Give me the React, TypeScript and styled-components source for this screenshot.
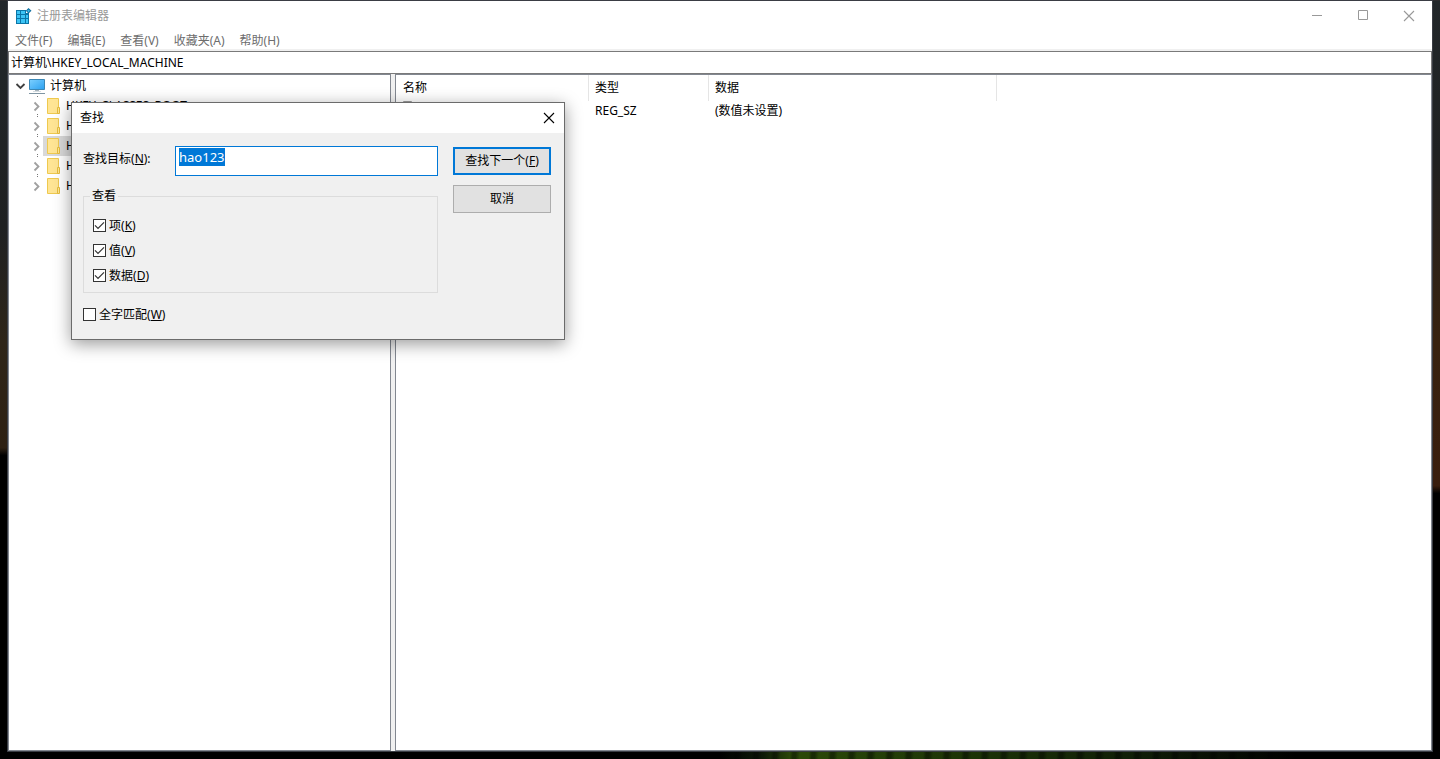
import React, { useEffect, useRef } from "react";
import styled, { createGlobalStyle } from "styled-components";

const GlobalStyle = createGlobalStyle`
  * { box-sizing: border-box; }
  body {
    margin: 0;
    font: 12px/16px "Noto Sans", "Noto Sans CJK SC", sans-serif;
    color: #000;
  }
  button, input { font: inherit; color: inherit; }
`;

const Desktop = styled.div`
  position: relative;
  display: flex;
  min-height: 100vh;
  padding: 1px 8px 8px;
  background:
    linear-gradient(90deg, #2b2b2d 7%, #8e8e8e 7%, #a8a8a8 24%, #e8e8e8 24%, #e0e0e0 67%, #2b2b2d 67%) top / 100% 1px no-repeat,
    repeating-linear-gradient(94deg, transparent 0 9px, rgba(0, 0, 0, 0.4) 12px 15px, transparent 19px) bottom / 100% 7px no-repeat,
    linear-gradient(90deg, transparent 50%, #0d1a08 53%, #2c4a08 55%, #1c3307 68%, #0f1c07 80%, transparent 90%) bottom / 100% 7px no-repeat,
    linear-gradient(180deg, #22272a 0%, #1f2122 30%, #2e2519 45%, #2e2113 59%, #000 60%) left / 8px 100% no-repeat,
    linear-gradient(180deg, #22272a 0%, #1f2122 20%, #38220f 45%, #3a1e0e 64%, #000 65%) right / 8px 100% no-repeat,
    #000;
`;

const Window = styled.main`
  flex: 1;
  min-width: 0;
  display: flex;
  flex-direction: column;
  background: #fff;
  box-shadow: 0 0 0 1px #3a3d44;
`;

const TitleBar = styled.header`
  display: flex;
  align-items: center;
  height: 29px;
  padding-left: 8px;
  gap: 5px;
  color: #999;
`;

const WindowTitle = styled.h1`
  flex: 1;
  margin: 0;
  font-size: 12px;
  font-weight: 400;
`;

const CaptionButtons = styled.div`
  display: flex;
  align-self: stretch;
`;

const CaptionButton = styled.button<{ $width?: number }>`
  display: flex;
  align-items: center;
  justify-content: center;
  width: ${(p) => p.$width ?? 46}px;
  padding: 0;
  border: 0;
  background: none;
`;

const MenuBar = styled.nav`
  display: flex;
  align-items: center;
  gap: 15px;
  height: 21px;
  padding: 2px 0 0 7px;
  border-bottom: 2px solid #f0f0f0;
`;

const MenuItem = styled.button`
  padding: 0;
  border: 0;
  background: none;
  color: #6d6d6d;
`;

const AddressBox = styled.input`
  width: 100%;
  height: 23px;
  padding: 0 2px 2px;
  border: 1px solid #7a7a7a;
  outline: 0;
`;

const Panes = styled.div`
  flex: 1;
  display: flex;
  gap: 4px;
  background: #f0f0f0;
`;

const Pane = styled.section<{ $width?: number }>`
  flex: ${(p) => (p.$width ? `0 0 ${p.$width}px` : "1")};
  min-width: 0;
  border: 1px solid #828790;
  background: #fff;
  overflow: hidden;
`;

const Tree = styled.ul`
  margin: 0;
  padding: 1px 0 0 6px;
  list-style: none;
`;

const Branch = styled.ul`
  margin: 0;
  padding: 0 0 0 16px;
  list-style: none;
`;

const TreeRow = styled.div`
  display: flex;
  align-items: center;
  height: 20px;
`;

const Toggle = styled.button`
  display: flex;
  width: 12px;
  height: 20px;
  padding: 0;
  border: 0;
  background: none;
`;

const TreeLabel = styled.span<{ $selected?: boolean }>`
  display: flex;
  align-items: center;
  gap: 5px;
  height: 20px;
  padding: 0 3px 0 2px;
  background: ${(p) => (p.$selected ? "#d9d9d9" : "none")};
`;

const ValueTable = styled.table`
  width: 601px;
  table-layout: fixed;
  border-collapse: separate;
  border-spacing: 0;
  text-align: left;

  th, td { padding: 0 6px; font-weight: 400; }
  th:first-child, td:first-child { padding-left: 7px; }
  th { height: 26px; border-right: 1px solid #e5e5e5; }
  td { height: 20px; }
`;

const NameColumn = styled.col`width: 193px;`;
const TypeColumn = styled.col`width: 120px;`;
const DataColumn = styled.col`width: 288px;`;

const Dialog = styled.div`
  position: absolute;
  left: 71px;
  top: 102px;
  width: 494px;
  border: 1px solid #6b6b6b;
  background: #f0f0f0;
  box-shadow: 0 4px 16px rgba(0, 0, 0, 0.4);
`;

const DialogTitleBar = styled.header`
  display: flex;
  align-items: center;
  justify-content: space-between;
  height: 30px;
  padding-left: 8px;
  background: #fff;
`;

const DialogTitle = styled.h2`
  margin: 0;
  font-size: 12px;
  font-weight: 400;
`;

const DialogForm = styled.form`
  display: flex;
  gap: 15px;
  padding: 13px 13px 12px 11px;
`;

const Fields = styled.div`
  flex: 1;
`;

const FindRow = styled.div`
  display: grid;
  grid-template-columns: 92px 1fr;
`;

const FindLabel = styled.label`
  padding-top: 5px;
`;

const FindInput = styled.input`
  min-width: 0;
  height: 30px;
  padding: 2px 3px 10px;
  border: 1px solid #0078d7;
  outline: 0;
  background: #fff;
  font-size: 13px;
  line-height: 16px;

  &::selection { background: #0078d7; color: #fff; }
`;

const LookAt = styled.fieldset`
  margin: 12px 0 9px;
  padding: 9px 9px 4px;
  border: 1px solid #dcdcdc;
`;

const Legend = styled.legend`
  padding: 0 2px 0 0;
  margin-left: -3px;
  border-left: 2px solid #f0f0f0;
`;

const CheckLabel = styled.label`
  display: flex;
  align-items: center;
  gap: 3px;
  height: 25px;
`;

const CheckBox = styled.input`
  appearance: none;
  width: 13px;
  height: 13px;
  margin: 0;
  border: 1px solid #333;
  background: #fff;

  &:checked {
    background: #fff url("data:image/svg+xml,%3Csvg xmlns='http://www.w3.org/2000/svg' viewBox='0 0 11 11'%3E%3Cpath d='M1 5.4 4 8.4 10 2.4' fill='none' stroke='%23333' stroke-width='1.2'/%3E%3C/svg%3E") center / 11px 11px no-repeat;
  }
`;

const Actions = styled.div`
  display: flex;
  flex-direction: column;
  gap: 10px;
  width: 98px;
  padding-top: 1px;
`;

const ActionButton = styled.button<{ $primary?: boolean }>`
  height: 28px;
  padding: 0;
  border: ${(p) => (p.$primary ? "2px solid #0078d7" : "1px solid #adadad")};
  background: #e1e1e1;
`;

const RegistryIcon = () => (
  <svg width="16" height="16" viewBox="0 0 16 16" aria-hidden="true">
    <path d="M0 2h10v3h3v11H0z" fill="#0a76a8" />
    <path
      d="M1 3h3v3H1zM5 3h4v3H5zM1 7h3v3H1zM5 7h4v3H5zM1 11h3v4H1zM5 11h4v4H5zM10 7h2v3h-2zM10 11h2v4h-2z"
      fill="#3cc4f5"
    />
    <path d="M12.5 0 15.5 2.8 12.5 5.6 9.8 2.8z" fill="#0f6f9f" />
    <path d="M12.5 1.4 14 2.8 12.5 4.2 11.1 2.8z" fill="#38b6e8" />
  </svg>
);

const CloseIcon = ({ color }: { color: string }) => (
  <svg width="12" height="12" viewBox="0 0 12 12" aria-hidden="true">
    <path d="M1 1l10 10M11 1 1 11" stroke={color} strokeWidth="1.1" fill="none" />
  </svg>
);

const MonitorIcon = () => (
  <svg width="16" height="16" viewBox="0 0 16 16" aria-hidden="true">
    <defs>
      <linearGradient id="screen" x1="0" y1="0" x2="1" y2="1">
        <stop offset="0" stopColor="#7dd0ff" />
        <stop offset="1" stopColor="#2aa0f0" />
      </linearGradient>
    </defs>
    <path d="M.5 1.5h15v10H.5z" fill="url(#screen)" stroke="#3b87b5" />
    <path d="M6 12h4v1H6z" fill="#a8b4bc" />
    <path d="M4 13h8v1H4z" fill="#d5dce0" />
    <path d="M0 15.5h16" stroke="#7f95a3" />
  </svg>
);

const FolderIcon = () => (
  <svg width="16" height="16" viewBox="0 0 16 16" aria-hidden="true">
    <path d="M2.5 .5h11v15h-11z" fill="#ffe594" stroke="#eec94f" />
    <path d="M12.5 9.5h2v6h-2z" fill="#ffe594" stroke="#e6bd3d" />
  </svg>
);

const StringIcon = () => (
  <svg width="12" height="16" viewBox="0 0 12 16" role="img" aria-label="字符串值">
    <path d="M.5 .5h8l3 3v12H.5z" fill="#fff" stroke="#999" />
    <path d="M3 8h6M3 11h6" stroke="#c33" />
  </svg>
);

const ExpandedMark = () => (
  <svg width="12" height="20" viewBox="0 0 12 20" aria-hidden="true">
    <path d="M1.5 8 5.5 12 9.5 8" fill="none" stroke="#404040" strokeWidth="1.8" />
  </svg>
);

const CollapsedMark = ({ last }: { last: boolean }) => (
  <svg width="12" height="20" viewBox="0 0 12 20" aria-hidden="true">
    <path d={last ? "M6 0h1v1H6z" : "M6 0h1v1H6zM6 18h1v1H6z"} fill="#777" />
    <path d="M3.5 6.5 7.500 10.5 3.5 14.500" fill="none" stroke="#a0a0a0" strokeWidth="1.8" />
  </svg>
);

const menus = ["文件(F)", "编辑(E)", "查看(V)", "收藏夹(A)", "帮助(H)"];

const hives = [
  "HKEY_CLASSES_ROOT",
  "HKEY_CURRENT_USER",
  "HKEY_LOCAL_MACHINE",
  "HKEY_USERS",
  "HKEY_CURRENT_CONFIG",
];

const lookAtOptions = [
  { text: "项", accessKey: "K" },
  { text: "值", accessKey: "V" },
  { text: "数据", accessKey: "D" },
];

function Mnemonic({ text, letter }: { text: string; letter: string }) {
  return (
    <span>
      {text}(<u>{letter}</u>)
    </span>
  );
}

function FindDialog() {
  const inputRef = useRef<HTMLInputElement>(null);

  useEffect(() => {
    inputRef.current?.focus();
    inputRef.current?.select();
  }, []);

  return (
    <Dialog role="dialog" aria-labelledby="find-title">
      <DialogTitleBar>
        <DialogTitle id="find-title">查找</DialogTitle>
        <CaptionButton $width={30} aria-label="关闭">
          <CloseIcon color="#000" />
        </CaptionButton>
      </DialogTitleBar>
      <DialogForm onSubmit={(e) => e.preventDefault()}>
        <Fields>
          <FindRow>
            <FindLabel htmlFor="find-what">
              <Mnemonic text="查找目标" letter="N" />:
            </FindLabel>
            <FindInput id="find-what" ref={inputRef} defaultValue="hao123" spellCheck={false} autoComplete="off" />
          </FindRow>
          <LookAt>
            <Legend>查看</Legend>
            {lookAtOptions.map((o) => (
              <CheckLabel key={o.accessKey}>
                <CheckBox type="checkbox" defaultChecked />
                <Mnemonic text={o.text} letter={o.accessKey} />
              </CheckLabel>
            ))}
          </LookAt>
          <CheckLabel>
            <CheckBox type="checkbox" />
            <Mnemonic text="全字匹配" letter="W" />
          </CheckLabel>
        </Fields>
        <Actions>
          <ActionButton type="submit" $primary>
            <Mnemonic text="查找下一个" letter="F" />
          </ActionButton>
          <ActionButton type="button">取消</ActionButton>
        </Actions>
      </DialogForm>
    </Dialog>
  );
}

export default function App() {
  return (
    <Desktop>
      <GlobalStyle />
      <Window>
        <TitleBar>
          <RegistryIcon />
          <WindowTitle>注册表编辑器</WindowTitle>
          <CaptionButtons>
            <CaptionButton aria-label="最小化">
              <svg width="11" height="11" aria-hidden="true">
                <path d="M0 5.5h10" stroke="#999" />
              </svg>
            </CaptionButton>
            <CaptionButton aria-label="最大化">
              <svg width="11" height="11" aria-hidden="true">
                <path d="M.5 .5h9v9h-9z" stroke="#999" fill="none" />
              </svg>
            </CaptionButton>
            <CaptionButton aria-label="关闭">
              <CloseIcon color="#999" />
            </CaptionButton>
          </CaptionButtons>
        </TitleBar>
        <MenuBar>
          {menus.map((m) => (
            <MenuItem key={m}>{m}</MenuItem>
          ))}
        </MenuBar>
        <AddressBox aria-label="地址" defaultValue={"计算机\\HKEY_LOCAL_MACHINE"} spellCheck={false} />
        <Panes>
          <Pane $width={383}>
            <Tree>
              <li>
                <TreeRow>
                  <Toggle aria-label="折叠">
                    <ExpandedMark />
                  </Toggle>
                  <TreeLabel>
                    <MonitorIcon />
                    计算机
                  </TreeLabel>
                </TreeRow>
                <Branch>
                  {hives.map((name, i) => (
                    <li key={name}>
                      <TreeRow>
                        <Toggle aria-label="展开">
                          <CollapsedMark last={i === hives.length - 1} />
                        </Toggle>
                        <TreeLabel $selected={name === "HKEY_LOCAL_MACHINE"}>
                          <FolderIcon />
                          {name}
                        </TreeLabel>
                      </TreeRow>
                    </li>
                  ))}
                </Branch>
              </li>
            </Tree>
          </Pane>
          <Pane>
            <ValueTable>
              <colgroup>
                <NameColumn />
                <TypeColumn />
                <DataColumn />
              </colgroup>
              <thead>
                <tr>
                  <th>名称</th>
                  <th>类型</th>
                  <th>数据</th>
                </tr>
              </thead>
              <tbody>
                <tr>
                  <td>
                    <StringIcon />
                  </td>
                  <td>REG_SZ</td>
                  <td>(数值未设置)</td>
                </tr>
              </tbody>
            </ValueTable>
          </Pane>
        </Panes>
      </Window>
      <FindDialog />
    </Desktop>
  );
}
